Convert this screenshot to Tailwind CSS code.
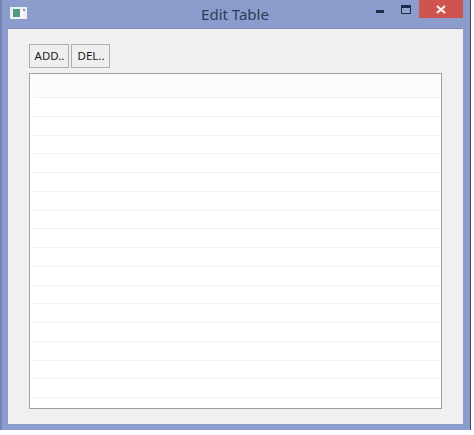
<!DOCTYPE html>
<html lang="en">
  <head>
    <meta charset="UTF-8" />
    <title>Edit Table</title>
    <script src="https://cdn.jsdelivr.net/npm/@tailwindcss/browser@4"></script>
  </head>
  <body class="bg-white w-[474px] h-[435px] overflow-hidden font-['Open_Sans',sans-serif]">
    <div class="w-[471px] h-[430px] bg-[#8c9ccd] border-l-2 border-l-[#7684b4] border-r border-r-[#3c4460] flex flex-col">
      <!-- title bar -->
      <div class="h-[28px] shrink-0 relative flex items-center justify-center">
        <svg class="absolute left-[8px] top-[7px]" width="17" height="12" viewBox="0 0 17 12">
          <rect width="17" height="12" fill="#eef1f4" />
          <rect x="3" y="2" width="7" height="8" fill="#4f9a83" />
          <rect x="10" y="2" width="4" height="8" fill="#f7f8f8" />
          <rect x="13" y="2" width="2" height="2" fill="#7d8aa8" />
        </svg>
        <span class="text-[15px] text-[#303b59] font-['Noto_Sans',sans-serif] mt-[1px] ml-[-2px]">Edit Table</span>
        <div class="absolute left-[374px] top-[10px] w-[8px] h-[3px] bg-[#1f2b4b]"></div>
        <div class="absolute left-[399px] top-[5px] w-[10px] h-[9px] border border-[#1f2b4b] border-t-[3px] bg-[#95a3cc]"></div>
        <div class="absolute left-[417px] top-0 w-[44px] h-[18px] bg-[#cf5450] flex items-center justify-center">
          <svg width="10" height="9" viewBox="0 0 10 9">
            <path d="M1 1 L9 8 M9 1 L1 8" stroke="#fdf3f2" stroke-width="2.2" />
          </svg>
        </div>
      </div>
      <!-- content -->
      <div class="ml-[6px] mr-[7px] h-[396px] bg-[#f0f0f0] border-t border-t-[#7f8bb0] pt-[15px] pl-[21px] pr-[21px] flex flex-col">
        <div class="flex gap-[2px] h-[24px] shrink-0">
          <button class="w-[40px] h-[24px] pl-[1px] bg-[#efefef] border border-[#adadad] text-[11.5px] text-[#1c1c1c] font-['Noto_Sans',sans-serif]">ADD..</button>
          <button class="w-[39px] h-[24px] pl-[1px] bg-[#efefef] border border-[#adadad] text-[11.5px] text-[#1c1c1c] font-['Noto_Sans',sans-serif]">DEL..</button>
        </div>
        <div class="mt-[5px] w-[413px] h-[336px] shrink-0 bg-white border border-[#a0a0a0] pl-[3px] pr-[1px] flex flex-col overflow-hidden">
          <div class="h-[24px] shrink-0 bg-[#fbfbfb] border-b border-[#f1f1f1]"></div>
          <div class="h-[18.75px] shrink-0 border-b border-[#f1f1f1]"></div>
          <div class="h-[18.75px] shrink-0 border-b border-[#f1f1f1]"></div>
          <div class="h-[18.75px] shrink-0 border-b border-[#f1f1f1]"></div>
          <div class="h-[18.75px] shrink-0 border-b border-[#f1f1f1]"></div>
          <div class="h-[18.75px] shrink-0 border-b border-[#f1f1f1]"></div>
          <div class="h-[18.75px] shrink-0 border-b border-[#f1f1f1]"></div>
          <div class="h-[18.75px] shrink-0 border-b border-[#f1f1f1]"></div>
          <div class="h-[18.75px] shrink-0 border-b border-[#f1f1f1]"></div>
          <div class="h-[18.75px] shrink-0 border-b border-[#f1f1f1]"></div>
          <div class="h-[18.75px] shrink-0 border-b border-[#f1f1f1]"></div>
          <div class="h-[18.75px] shrink-0 border-b border-[#f1f1f1]"></div>
          <div class="h-[18.75px] shrink-0 border-b border-[#f1f1f1]"></div>
          <div class="h-[18.75px] shrink-0 border-b border-[#f1f1f1]"></div>
          <div class="h-[18.75px] shrink-0 border-b border-[#f1f1f1]"></div>
          <div class="h-[18.75px] shrink-0 border-b border-[#f1f1f1]"></div>
          <div class="h-[18.75px] shrink-0 border-b border-[#f1f1f1]"></div>
        </div>
      </div>
    </div>
  </body>
</html>
